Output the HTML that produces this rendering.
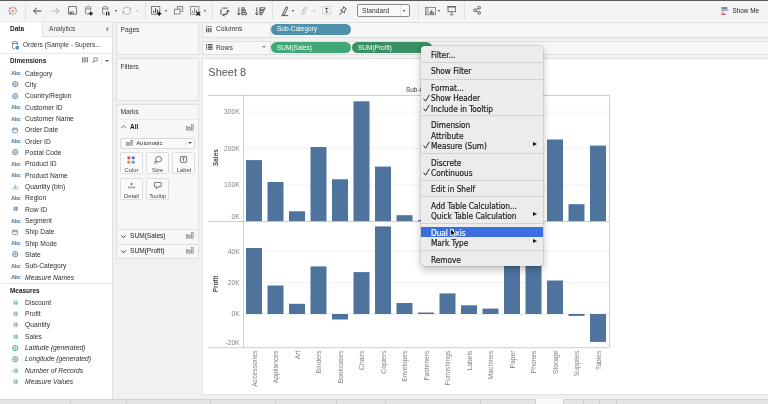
<!DOCTYPE html><html><head><meta charset="utf-8"><title>Tableau - Sheet 8</title><style>
*{box-sizing:border-box}
html,body{margin:0;padding:0}
body{width:768px;height:404px;overflow:hidden;position:relative;background:#f1f1f1;font-family:"Liberation Sans",sans-serif;font-size:6.6px;color:#333;line-height:1}
.a{position:absolute}
.t{position:absolute;white-space:nowrap;line-height:10px;height:10px}
.card{position:absolute;background:#f7f7f7;border:1px solid #e0e0e0}
.sep{position:absolute;width:1px;background:#e2e2e2;top:1.5px;height:18.5px}
.pill{position:absolute;border-radius:6px;color:#fff;font-size:6.5px;line-height:10.5px;padding-left:6px;white-space:nowrap}
.mi{position:absolute;left:10px;white-space:nowrap;line-height:10px;height:10px}
.ms{position:absolute;left:0;right:0;height:1px;background:#d2d2d2}
.ck{position:absolute;left:1.6px;width:7px;height:8px}
.ar{position:absolute;left:111.5px;width:0;height:0;border-left:4.6px solid #1a1a1a;border-top:2.7px solid transparent;border-bottom:2.7px solid transparent}
.btn{position:absolute;background:#fafafa;border:1px solid #dedede;border-radius:1.5px}
.btn span{position:absolute;left:0;right:0;text-align:center;top:13.4px;font-size:5.8px;line-height:7px;color:#444}
svg{position:absolute;overflow:visible}
</style></head><body><div id="w" style="position:absolute;left:0;top:0;width:768px;height:404px;will-change:transform">
<div class="a" style="left:0;top:0;width:768px;height:21px;background:#f4f4f4;border-bottom:1px solid #f8f8f8"></div>
<div class="a" style="left:0;top:0;width:768px;height:1px;background:#5a5a5a"></div>
<div class="sep" style="left:25.2px"></div>
<div class="sep" style="left:145px"></div>
<div class="sep" style="left:212.2px"></div>
<div class="sep" style="left:271.8px"></div>
<div class="sep" style="left:418px"></div>
<div class="sep" style="left:464px"></div>
<svg style="left:8px;top:5.6px" width="9.6" height="9.6" viewBox="0 0 20 20"><path d="M10 6.5V13.5M6.5 10H13.5" stroke="#e8762d" stroke-width="1.5"/><path d="M10 0.5V4.5M8 2.5H12" stroke="#7099a6" stroke-width="1.1"/><path d="M10 15.5V19.5M8 17.5H12" stroke="#7099a6" stroke-width="1.1"/><path d="M2.5 8V12M0.5 10H4.5" stroke="#59879b" stroke-width="1.1"/><path d="M17.5 8V12M15.5 10H19.5" stroke="#59879b" stroke-width="1.1"/><path d="M4.7 2.6V7M2.5 4.8H6.9" stroke="#c72035" stroke-width="1.2"/><path d="M15.3 2.6V7M13.1 4.8H17.5" stroke="#5b6591" stroke-width="1.2"/><path d="M4.7 13V17.4M2.5 15.2H6.9" stroke="#1f447e" stroke-width="1.2"/><path d="M15.3 13V17.4M13.1 15.2H17.5" stroke="#eb912c" stroke-width="1.2"/></svg>
<svg style="left:33.3px;top:6.8px" width="8.6" height="8" viewBox="0 0 8.6 8"><path d="M8.4 4H0.8M4 0.6L0.7 4L4 7.4" fill="none" stroke="#3c3c3c" stroke-width="0.95"/></svg>
<svg style="left:51px;top:6.8px" width="8.6" height="8" viewBox="0 0 8.6 8"><path d="M0.2 4H7.8M4.6 0.6L7.9 4L4.6 7.4" fill="none" stroke="#b4b4b4" stroke-width="1"/></svg>
<svg style="left:67.6px;top:6.3px" width="9" height="8.8" viewBox="0 0 9 8.8"><rect x="0.5" y="0.5" width="8" height="7.8" rx="0.7" fill="none" stroke="#7c7c7c" stroke-width="1.05"/><rect x="1.5" y="5.6" width="4.2" height="2.3" fill="#666"/><rect x="3.8" y="6.2" width="1" height="1.3" fill="#ddd"/></svg>
<svg style="left:85.3px;top:5.8px" width="8" height="10" viewBox="0 0 8 10"><path d="M0.6 1.8V7.2C0.6 8.2 3 8.4 3.6 8.3M5.8 4.6V1.8" fill="none" stroke="#787878" stroke-width="0.9"/><ellipse cx="3.2" cy="1.8" rx="2.6" ry="1.2" fill="none" stroke="#787878" stroke-width="0.9"/><path d="M5.8 5.4V9.6M3.7 7.5H7.9" stroke="#222" stroke-width="1.3"/></svg>
<svg style="left:102px;top:5.8px" width="8" height="10" viewBox="0 0 8 10"><path d="M0.6 1.8V7.2C0.6 8.2 2.6 8.4 3.2 8.3M5.8 4.6V1.8" fill="none" stroke="#787878" stroke-width="0.9"/><ellipse cx="3.2" cy="1.8" rx="2.6" ry="1.2" fill="none" stroke="#787878" stroke-width="0.9"/><path d="M4.6 5.8V9.6M6.8 5.8V9.6" stroke="#222" stroke-width="1.2"/></svg>
<div class="a" style="left:114.6px;top:9.8px;border-top:2.3px solid #3c3c3c;border-left:1.9px solid transparent;border-right:1.9px solid transparent"></div>
<svg style="left:122px;top:5.7px" width="9.6" height="9.6" viewBox="0 0 9 9"><path d="M1 3.6A3.7 3.7 0 0 1 8 3.4M8 5.4A3.7 3.7 0 0 1 1 5.6" fill="none" stroke="#b4b4b4" stroke-width="0.9"/><path d="M8.4 1.6V3.8H6.4M0.6 7.4V5.2H2.6" fill="none" stroke="#b4b4b4" stroke-width="0.8"/></svg>
<div class="a" style="left:136.10000000000002px;top:9.8px;border-top:2.3px solid #b4b4b4;border-left:1.9px solid transparent;border-right:1.9px solid transparent"></div>
<svg style="left:151px;top:6.1px" width="10.9" height="10" viewBox="0 0 10.5 9.6"><rect x="0.5" y="0.5" width="8" height="7.4" fill="none" stroke="#777" stroke-width="0.9"/><path d="M2.6 6.6V4.6M4.4 6.6V2.2M6.2 6.6V3.6" stroke="#333" stroke-width="0.9"/><path d="M8 5.4V9.4M6 7.4H10" stroke="#111" stroke-width="1.3"/></svg>
<div class="a" style="left:165.3px;top:9.8px;border-top:2.3px solid #3c3c3c;border-left:1.9px solid transparent;border-right:1.9px solid transparent"></div>
<svg style="left:174px;top:6px" width="9.4" height="9" viewBox="0 0 9.4 9"><rect x="3.4" y="0.5" width="5.4" height="4.8" fill="#f4f4f4" stroke="#777" stroke-width="0.8"/><rect x="0.5" y="3.2" width="5.4" height="4.8" fill="#f4f4f4" stroke="#777" stroke-width="0.8"/><path d="M5 2H7.4M5 3.2H7.4" stroke="#999" stroke-width="0.5"/></svg>
<svg style="left:190px;top:6.1px" width="10.9" height="10" viewBox="0 0 10.5 9.6"><rect x="0.5" y="0.5" width="8" height="7.4" fill="none" stroke="#8a8a8a" stroke-width="0.9"/><path d="M2.6 6.6V4.6M4.4 6.6V2.2M6.2 6.6V3.6" stroke="#777" stroke-width="0.9"/><path d="M6.2 5.6L9.8 9.2M9.8 5.6L6.2 9.2" stroke="#111" stroke-width="1.2"/></svg>
<div class="a" style="left:204.10000000000002px;top:9.8px;border-top:2.3px solid #3c3c3c;border-left:1.9px solid transparent;border-right:1.9px solid transparent"></div>
<svg style="left:220px;top:6.6px" width="9.4" height="9.2" viewBox="0 0 9 9"><path d="M2 1.1H7.6M0.9 2.4V7.4" stroke="#4a4a4a" stroke-width="1.3" stroke-dasharray="1.3 0.55"/><path d="M2.6 7.9C6.2 7.9 7.8 6.4 7.8 3" fill="none" stroke="#444" stroke-width="1"/><path d="M6.3 4.6L7.8 3L9 4.6M4.2 6.6L2.6 7.9L4.2 9.2" fill="none" stroke="#444" stroke-width="0.9"/></svg>
<svg style="left:237px;top:6.6px" width="10" height="9" viewBox="0 0 10 9"><path d="M1.8 0.4V7.8M0.3 6.2L1.8 8L3.3 6.2" fill="none" stroke="#3a3a3a" stroke-width="0.85"/><rect x="4.9" y="0.8" width="2.4" height="1.9" fill="none" stroke="#4e4e4e" stroke-width="0.85"/><rect x="4.9" y="3.3" width="3.4" height="1.9" fill="none" stroke="#4e4e4e" stroke-width="0.85"/><rect x="4.9" y="5.8" width="4.6" height="1.9" fill="none" stroke="#4e4e4e" stroke-width="0.85"/></svg>
<svg style="left:254.5px;top:6.6px" width="10" height="9" viewBox="0 0 10 9"><path d="M1.8 0.4V7.8M0.3 6.2L1.8 8L3.3 6.2" fill="none" stroke="#3a3a3a" stroke-width="0.85"/><rect x="4.9" y="0.8" width="4.8" height="1.9" fill="none" stroke="#4e4e4e" stroke-width="0.85"/><rect x="4.9" y="3.3" width="3.4" height="1.9" fill="none" stroke="#4e4e4e" stroke-width="0.85"/><rect x="4.9" y="5.8" width="2" height="1.9" fill="none" stroke="#4e4e4e" stroke-width="0.85"/></svg>
<svg style="left:280.6px;top:5.8px" width="8" height="10" viewBox="0 0 8 10"><path d="M2 7.4L5.2 0.8L6.8 1.6L3.6 8.2L1.6 8.8Z" fill="none" stroke="#333" stroke-width="0.8"/><path d="M0.4 9.6H7" stroke="#333" stroke-width="0.8"/></svg>
<div class="a" style="left:292.0px;top:9.8px;border-top:2.3px solid #3c3c3c;border-left:1.9px solid transparent;border-right:1.9px solid transparent"></div>
<svg style="left:301px;top:6px" width="6.4" height="9.4" viewBox="0 0 6.4 9.4"><path d="M1.2 6.4L3.8 1.6C4.6 0.2 6.4 1.2 5.6 2.6L2.8 7.8C2 9.2 0.2 8.2 1 6.8L3.4 2.6" fill="none" stroke="#b4b4b4" stroke-width="0.8"/></svg>
<div class="a" style="left:313.1px;top:9.8px;border-top:2.3px solid #b4b4b4;border-left:1.9px solid transparent;border-right:1.9px solid transparent"></div>
<svg style="left:322.3px;top:6.4px" width="9.4" height="8.6" viewBox="0 0 9.4 8.6"><rect x="0.5" y="0.5" width="8.4" height="7.6" fill="none" stroke="#b0b0b0" stroke-width="0.7" stroke-dasharray="1 0.6"/><path d="M3 2.4H6.4M4.7 2.4V6.2M3.8 6.2H5.6" stroke="#444" stroke-width="0.8" fill="none"/></svg>
<svg style="left:339.4px;top:6px" width="8" height="9.4" viewBox="0 0 8 9.4"><path d="M4.4 0.8L7.4 3L6.4 3.6L5.2 5.8L5.6 7L1.6 4.4L3 4L4.6 2Z" fill="none" stroke="#333" stroke-width="0.8" stroke-linejoin="round"/><path d="M3 5.6L0.6 9" stroke="#333" stroke-width="0.8"/></svg>
<svg style="left:425px;top:6.6px" width="11" height="8.4" viewBox="0 0 11 8.4"><rect x="0.4" y="0.4" width="10" height="7.4" fill="none" stroke="#777" stroke-width="0.8"/><path d="M1.6 1.6H3.4V3H1.6ZM1.6 3.8H3.4V5.2H1.6ZM1.6 5.8H3.4V6.8H1.6Z" fill="none" stroke="#888" stroke-width="0.5"/><path d="M5.4 6.8V4.6M6.8 6.8V3M8.2 6.8V5" stroke="#333" stroke-width="0.9"/><path d="M4.8 6.9H9.4" stroke="#555" stroke-width="0.5"/></svg>
<div class="a" style="left:438.1px;top:9.8px;border-top:2.3px solid #3c3c3c;border-left:1.9px solid transparent;border-right:1.9px solid transparent"></div>
<svg style="left:447px;top:6.2px" width="9.4" height="9.4" viewBox="0 0 9.4 9.4"><path d="M0.2 0.8H9.2" stroke="#444" stroke-width="0.9"/><rect x="1" y="0.8" width="7.4" height="5" fill="none" stroke="#555" stroke-width="0.8"/><path d="M4.7 5.8V8.6M3 8.8H6.4" stroke="#555" stroke-width="0.8"/></svg>
<svg style="left:472.6px;top:6.4px" width="8" height="8.6" viewBox="0 0 8 8.6"><circle cx="1.8" cy="4.3" r="1.3" fill="none" stroke="#444" stroke-width="0.8"/><circle cx="6.2" cy="1.7" r="1.3" fill="none" stroke="#444" stroke-width="0.8"/><circle cx="6.2" cy="6.9" r="1.3" fill="none" stroke="#444" stroke-width="0.8"/><path d="M2.9 3.6L5.1 2.4M2.9 5L5.1 6.2" stroke="#444" stroke-width="0.8"/></svg>
<svg style="left:721.3px;top:6.5px" width="7.6" height="9" viewBox="0 0 7.6 9"><path d="M0.4 1H6.4" stroke="#55557a" stroke-width="1.4"/><path d="M0.4 3.1H7.4" stroke="#7a8ccc" stroke-width="1.3"/><path d="M0.4 5.1H3" stroke="#e89a6a" stroke-width="1.1"/><path d="M0.4 7.2H4.8" stroke="#d2506c" stroke-width="1.5"/></svg>
<div class="a" style="left:357px;top:4.2px;width:52.5px;height:12.4px;background:#fafafa;border:1px solid #8a8a8a;border-radius:2px"></div>
<div class="a" style="left:400px;top:5.2px;width:1px;height:10.4px;background:#e6e6e6"></div>
<div class="t" style="left:362px;top:5.6px;font-size:6.7px;color:#333">Standard</div>
<div class="a" style="left:403.2px;top:9.6px;border-top:2.3px solid #333;border-left:1.9px solid transparent;border-right:1.9px solid transparent"></div>
<div class="t" style="left:732.5px;top:5.6px;font-size:6.4px;color:#222">Show Me</div>
<div class="a" style="left:0;top:21.5px;width:112.5px;height:377.5px;background:#fff;border-right:1px solid #e0e0e0"></div>
<div class="a" style="left:0;top:20.6px;width:112.5px;height:1px;background:#e8e8e8"></div>
<div class="a" style="left:41.8px;top:21.6px;width:70.7px;height:15.7px;background:#f5f5f5;border-left:1px solid #e0e0e0;border-bottom:1px solid #e0e0e0"></div>
<div class="t" style="left:10px;top:24px;font-weight:bold;font-size:6.5px;color:#222">Data</div>
<div class="t" style="left:49px;top:24px;font-size:6.6px;color:#444">Analytics</div>
<div class="a" style="left:0;top:53px;width:112px;height:1px;background:#ebebeb"></div>
<div class="t" style="left:23px;top:40px;font-size:6.5px;color:#333">Orders (Sample - Supers...</div>
<div class="t" style="left:10px;top:55.5px;font-weight:bold;font-size:6.4px;color:#222">Dimensions</div>
<div class="a" style="left:101px;top:56px;width:1px;height:9px;background:#e6e6e6"></div>
<div class="a" style="left:104.5px;top:59.5px;border-top:2.6px solid #555;border-left:2px solid transparent;border-right:2px solid transparent"></div>
<svg style="left:105.5px;top:26.6px" width="2.6" height="4.4" viewBox="0 0 3 5.4"><path d="M0 2.2L1.5 0.3L3 2.2ZM0 3.2L1.5 5.1L3 3.2Z" fill="#666"/></svg>
<svg style="left:12.2px;top:40.8px" width="7.4" height="8.8" viewBox="0 0 7.4 8.8"><ellipse cx="3" cy="1.6" rx="2.5" ry="1.1" fill="none" stroke="#666" stroke-width="0.8"/><path d="M0.5 1.6V6.6C0.5 7.6 2.6 7.8 3.2 7.7M5.5 1.6V4" fill="none" stroke="#666" stroke-width="0.8"/><circle cx="5.3" cy="6.6" r="1.85" fill="#3b7cc0"/><path d="M4.4 6.6L5.1 7.3L6.3 5.9" fill="none" stroke="#fff" stroke-width="0.45"/></svg>
<svg style="left:81.6px;top:57.4px" width="6" height="5.6" viewBox="0 0 6 5.6"><path d="M0.6 0.2V5.4M2.2 0.2V5.4M3.8 0.2V5.4M5.4 0.2V5.4" stroke="#7c7c7c" stroke-width="1"/></svg>
<svg style="left:91.6px;top:57px" width="6" height="6.4" viewBox="0 0 6 6.4"><circle cx="3.6" cy="2.4" r="1.9" fill="none" stroke="#666" stroke-width="0.8"/><path d="M2.2 3.8L0.4 6" stroke="#666" stroke-width="0.9"/></svg>
<div class="t" style="left:11.2px;top:68.30px;font-size:5.1px;font-weight:bold;color:#5e8bb2;letter-spacing:-0.1px;-webkit-text-stroke:0.2px #5e8bb2">Abc</div>
<div class="t" style="left:25.1px;top:68.60px;font-size:6.7px;color:#2e2e2e;">Category</div>
<svg style="left:12px;top:81.33px" width="6.4" height="6.4" viewBox="0 0 10 10"><circle cx="5" cy="5" r="4.1" fill="#fff" stroke="#5e8bb2" stroke-width="1.5"/><path d="M5 1V9M1 5H9" stroke="#5e8bb2" stroke-width="1"/></svg>
<div class="t" style="left:25.1px;top:79.93px;font-size:6.7px;color:#2e2e2e;">City</div>
<svg style="left:12px;top:92.66px" width="6.4" height="6.4" viewBox="0 0 10 10"><circle cx="5" cy="5" r="4.1" fill="#fff" stroke="#5e8bb2" stroke-width="1.5"/><path d="M5 1V9M1 5H9" stroke="#5e8bb2" stroke-width="1"/></svg>
<div class="t" style="left:25.1px;top:91.26px;font-size:6.7px;color:#2e2e2e;">Country/Region</div>
<div class="t" style="left:11.2px;top:102.29px;font-size:5.1px;font-weight:bold;color:#5e8bb2;letter-spacing:-0.1px;-webkit-text-stroke:0.2px #5e8bb2">Abc</div>
<div class="t" style="left:25.1px;top:102.59px;font-size:6.7px;color:#2e2e2e;">Customer ID</div>
<div class="t" style="left:11.2px;top:113.62px;font-size:5.1px;font-weight:bold;color:#5e8bb2;letter-spacing:-0.1px;-webkit-text-stroke:0.2px #5e8bb2">Abc</div>
<div class="t" style="left:25.1px;top:113.92px;font-size:6.7px;color:#2e2e2e;">Customer Name</div>
<svg style="left:12.3px;top:126.65px" width="6" height="6.2" viewBox="0 0 10 10"><rect x="1" y="2" width="8" height="7.2" rx="1.2" fill="none" stroke="#5e8bb2" stroke-width="1.4"/><path d="M1 4.2H9" stroke="#5e8bb2" stroke-width="1.2"/><path d="M3 0.6V2.6M7 0.6V2.6" stroke="#5e8bb2" stroke-width="1.1"/></svg>
<div class="t" style="left:25.1px;top:125.25px;font-size:6.7px;color:#2e2e2e;">Order Date</div>
<div class="t" style="left:11.2px;top:136.28px;font-size:5.1px;font-weight:bold;color:#5e8bb2;letter-spacing:-0.1px;-webkit-text-stroke:0.2px #5e8bb2">Abc</div>
<div class="t" style="left:25.1px;top:136.58px;font-size:6.7px;color:#2e2e2e;">Order ID</div>
<svg style="left:12px;top:149.31px" width="6.4" height="6.4" viewBox="0 0 10 10"><circle cx="5" cy="5" r="4.1" fill="#fff" stroke="#5e8bb2" stroke-width="1.5"/><path d="M5 1V9M1 5H9" stroke="#5e8bb2" stroke-width="1"/></svg>
<div class="t" style="left:25.1px;top:147.91px;font-size:6.7px;color:#2e2e2e;">Postal Code</div>
<div class="t" style="left:11.2px;top:158.94px;font-size:5.1px;font-weight:bold;color:#5e8bb2;letter-spacing:-0.1px;-webkit-text-stroke:0.2px #5e8bb2">Abc</div>
<div class="t" style="left:25.1px;top:159.24px;font-size:6.7px;color:#2e2e2e;">Product ID</div>
<div class="t" style="left:11.2px;top:170.27px;font-size:5.1px;font-weight:bold;color:#5e8bb2;letter-spacing:-0.1px;-webkit-text-stroke:0.2px #5e8bb2">Abc</div>
<div class="t" style="left:25.1px;top:170.57px;font-size:6.7px;color:#2e2e2e;">Product Name</div>
<svg style="left:12px;top:183.50px" width="7" height="5.6" viewBox="0 0 12 10"><path d="M1 9.5V7M3.6 9.5V3.5M6.2 9.5V1M8.8 9.5V4.5M11.2 9.5V8" stroke="#58a888" stroke-width="1.2" fill="none"/></svg>
<div class="t" style="left:25.1px;top:181.90px;font-size:6.7px;color:#2e2e2e;">Quantity (bin)</div>
<div class="t" style="left:11.2px;top:192.93px;font-size:5.1px;font-weight:bold;color:#5e8bb2;letter-spacing:-0.1px;-webkit-text-stroke:0.2px #5e8bb2">Abc</div>
<div class="t" style="left:25.1px;top:193.23px;font-size:6.7px;color:#2e2e2e;">Region</div>
<svg style="left:12.6px;top:206.36px" width="5.4" height="5.6" viewBox="0 0 10 10"><path d="M3.4 0.5V9.5M6.8 0.5V9.5M0.5 3.3H9.5M0.5 6.7H9.5" stroke="#5e8bb2" stroke-width="1.5" fill="none"/></svg>
<div class="t" style="left:25.1px;top:204.56px;font-size:6.7px;color:#2e2e2e;">Row ID</div>
<div class="t" style="left:11.2px;top:215.59px;font-size:5.1px;font-weight:bold;color:#5e8bb2;letter-spacing:-0.1px;-webkit-text-stroke:0.2px #5e8bb2">Abc</div>
<div class="t" style="left:25.1px;top:215.89px;font-size:6.7px;color:#2e2e2e;">Segment</div>
<svg style="left:12.3px;top:228.62px" width="6" height="6.2" viewBox="0 0 10 10"><rect x="1" y="2" width="8" height="7.2" rx="1.2" fill="none" stroke="#5e8bb2" stroke-width="1.4"/><path d="M1 4.2H9" stroke="#5e8bb2" stroke-width="1.2"/><path d="M3 0.6V2.6M7 0.6V2.6" stroke="#5e8bb2" stroke-width="1.1"/></svg>
<div class="t" style="left:25.1px;top:227.22px;font-size:6.7px;color:#2e2e2e;">Ship Date</div>
<div class="t" style="left:11.2px;top:238.25px;font-size:5.1px;font-weight:bold;color:#5e8bb2;letter-spacing:-0.1px;-webkit-text-stroke:0.2px #5e8bb2">Abc</div>
<div class="t" style="left:25.1px;top:238.55px;font-size:6.7px;color:#2e2e2e;">Ship Mode</div>
<svg style="left:12px;top:251.28px" width="6.4" height="6.4" viewBox="0 0 10 10"><circle cx="5" cy="5" r="4.1" fill="#fff" stroke="#5e8bb2" stroke-width="1.5"/><path d="M5 1V9M1 5H9" stroke="#5e8bb2" stroke-width="1"/></svg>
<div class="t" style="left:25.1px;top:249.88px;font-size:6.7px;color:#2e2e2e;">State</div>
<div class="t" style="left:11.2px;top:260.91px;font-size:5.1px;font-weight:bold;color:#5e8bb2;letter-spacing:-0.1px;-webkit-text-stroke:0.2px #5e8bb2">Abc</div>
<div class="t" style="left:25.1px;top:261.21px;font-size:6.7px;color:#2e2e2e;">Sub-Category</div>
<div class="t" style="left:11.2px;top:272.24px;font-size:5.1px;font-weight:bold;color:#5e8bb2;font-style:italic;letter-spacing:-0.1px;-webkit-text-stroke:0.2px #5e8bb2">Abc</div>
<div class="t" style="left:25.1px;top:272.54px;font-size:6.7px;color:#2e2e2e;font-style:italic;">Measure Names</div>
<div class="a" style="left:0;top:283.3px;width:112px;height:1px;background:#ebebeb"></div>
<div class="t" style="left:10px;top:285.8px;font-weight:bold;font-size:6.4px;color:#222">Measures</div>
<svg style="left:12.6px;top:299.60px" width="5.4" height="5.6" viewBox="0 0 10 10"><path d="M3.4 0.5V9.5M6.8 0.5V9.5M0.5 3.3H9.5M0.5 6.7H9.5" stroke="#58a888" stroke-width="1.15" fill="none"/></svg>
<div class="t" style="left:25.1px;top:297.80px;font-size:6.7px;color:#2e2e2e;">Discount</div>
<svg style="left:12.6px;top:310.93px" width="5.4" height="5.6" viewBox="0 0 10 10"><path d="M3.4 0.5V9.5M6.8 0.5V9.5M0.5 3.3H9.5M0.5 6.7H9.5" stroke="#58a888" stroke-width="1.15" fill="none"/></svg>
<div class="t" style="left:25.1px;top:309.13px;font-size:6.7px;color:#2e2e2e;">Profit</div>
<svg style="left:12.6px;top:322.26px" width="5.4" height="5.6" viewBox="0 0 10 10"><path d="M3.4 0.5V9.5M6.8 0.5V9.5M0.5 3.3H9.5M0.5 6.7H9.5" stroke="#58a888" stroke-width="1.15" fill="none"/></svg>
<div class="t" style="left:25.1px;top:320.46px;font-size:6.7px;color:#2e2e2e;">Quantity</div>
<svg style="left:12.6px;top:333.59px" width="5.4" height="5.6" viewBox="0 0 10 10"><path d="M3.4 0.5V9.5M6.8 0.5V9.5M0.5 3.3H9.5M0.5 6.7H9.5" stroke="#58a888" stroke-width="1.15" fill="none"/></svg>
<div class="t" style="left:25.1px;top:331.79px;font-size:6.7px;color:#2e2e2e;">Sales</div>
<svg style="left:12px;top:344.52px" width="6.4" height="6.4" viewBox="0 0 10 10"><circle cx="5" cy="5" r="4.1" fill="#fff" stroke="#58a888" stroke-width="1.5"/><path d="M5 1V9M1 5H9" stroke="#58a888" stroke-width="1"/></svg>
<div class="t" style="left:25.1px;top:343.12px;font-size:6.7px;color:#2e2e2e;font-style:italic;">Latitude (generated)</div>
<svg style="left:12px;top:355.85px" width="6.4" height="6.4" viewBox="0 0 10 10"><circle cx="5" cy="5" r="4.1" fill="#fff" stroke="#58a888" stroke-width="1.5"/><path d="M5 1V9M1 5H9" stroke="#58a888" stroke-width="1"/></svg>
<div class="t" style="left:25.1px;top:354.45px;font-size:6.7px;color:#2e2e2e;font-style:italic;">Longitude (generated)</div>
<svg style="left:10.6px;top:367.58px" width="7.6" height="5.6" viewBox="0 0 14 10"><path d="M7.4 0.5V9.5M10.8 0.5V9.5M4.5 3.3H13.5M4.5 6.7H13.5" stroke="#58a888" stroke-width="1.15" fill="none"/><path d="M0.5 5H3.5" stroke="#58a888" stroke-width="1.3"/></svg>
<div class="t" style="left:25.1px;top:365.78px;font-size:6.7px;color:#2e2e2e;font-style:italic;">Number of Records</div>
<svg style="left:12.6px;top:378.91px" width="5.4" height="5.6" viewBox="0 0 10 10"><path d="M3.4 0.5V9.5M6.8 0.5V9.5M0.5 3.3H9.5M0.5 6.7H9.5" stroke="#58a888" stroke-width="1.15" fill="none"/></svg>
<div class="t" style="left:25.1px;top:377.11px;font-size:6.7px;color:#2e2e2e;font-style:italic;">Measure Values</div>
<div class="card" style="left:116px;top:21.7px;width:82.8px;height:33px"></div>
<div class="t" style="left:120.5px;top:25px;font-size:6.7px;color:#333">Pages</div>
<div class="card" style="left:116px;top:58px;width:82.8px;height:42.5px"></div>
<div class="t" style="left:120.5px;top:61.5px;font-size:6.7px;color:#333">Filters</div>
<div class="card" style="left:116px;top:103.5px;width:82.8px;height:155px"></div>
<div class="t" style="left:120.5px;top:107px;font-size:6.7px;color:#333">Marks</div>
<div class="a" style="left:117.5px;top:119px;width:80.5px;height:1px;background:#e9e9e9"></div>
<div class="t" style="left:130px;top:121.7px;font-size:6.5px;font-weight:bold;color:#222">All</div>
<div class="a" style="left:120px;top:137.5px;width:75px;height:11.2px;background:#fafafa;border:1px solid #d8d8d8;border-radius:2px"></div>
<div class="a" style="left:185.3px;top:138.5px;width:1px;height:9.2px;background:#e8e8e8"></div>
<div class="a" style="left:188.4px;top:142.2px;border-top:2.6px solid #555;border-left:2px solid transparent;border-right:2px solid transparent"></div>
<div class="t" style="left:136.2px;top:138.4px;font-size:5.9px;color:#333">Automatic</div>
<div class="btn" style="left:120px;top:152.4px;width:22.8px;height:22px"><span>Color</span></div>
<div class="btn" style="left:146.2px;top:152.4px;width:22.8px;height:22px"><span>Size</span></div>
<div class="btn" style="left:172.4px;top:152.4px;width:23px;height:22px"><span>Label</span></div>
<div class="btn" style="left:120px;top:178.2px;width:22.8px;height:22px"><span>Detail</span></div>
<div class="btn" style="left:146.2px;top:178.2px;width:22.8px;height:22px"><span>Tooltip</span></div>
<div class="a" style="left:117.5px;top:229px;width:80.5px;height:1px;background:#e2e2e2"></div>
<div class="a" style="left:117.5px;top:243.5px;width:80.5px;height:1px;background:#e2e2e2"></div>
<div class="t" style="left:130px;top:231.3px;font-size:6.6px;color:#222">SUM(Sales)</div>
<div class="t" style="left:130px;top:245.6px;font-size:6.6px;color:#222">SUM(Profit)</div>
<div class="card" style="left:201.8px;top:22px;width:571px;height:15.5px;background:#f7f7f7"></div>
<div class="a" style="left:269.5px;top:23px;width:1px;height:13.5px;background:#dedede"></div>
<div class="t" style="left:216px;top:24.3px;font-size:6.7px;color:#333">Columns</div>
<div class="card" style="left:201.8px;top:40.5px;width:571px;height:14.5px;background:#f7f7f7"></div>
<div class="a" style="left:269.5px;top:41.5px;width:1px;height:12.5px;background:#dedede"></div>
<div class="t" style="left:216px;top:42.5px;font-size:6.7px;color:#333">Rows</div>
<div class="a" style="left:262px;top:46.4px;border-top:2.8px solid #8c8c8c;border-left:2.4px solid transparent;border-right:2.4px solid transparent"></div>
<div class="pill" style="left:271px;top:24px;width:80px;height:10.5px;background:#4f91ab">Sub-Category</div>
<div class="pill" style="left:271px;top:42px;width:80px;height:11px;background:#40a876;line-height:11px">SUM(Sales)</div>
<div class="pill" style="left:352px;top:42px;width:80px;height:11px;background:#3a9065;line-height:11px">SUM(Profit)</div>
<svg style="left:121.2px;top:124.6px" width="5" height="3.4" viewBox="0 0 5 3.4"><path d="M0.3 3L2.5 0.6L4.7 3" fill="none" stroke="#555" stroke-width="0.8"/></svg>
<svg style="left:186px;top:123.7px" width="7.6" height="6.6" viewBox="0 0 7.6 6.6"><rect x="0.3" y="2.5" width="1.6" height="3.9" fill="#c8c8c8" stroke="#6e6e6e" stroke-width="0.42"/><rect x="2.9" y="3.1" width="1.5" height="3.3" fill="#c8c8c8" stroke="#6e6e6e" stroke-width="0.42"/><rect x="5.3" y="0.3" width="1.9" height="6.1" fill="#c8c8c8" stroke="#6e6e6e" stroke-width="0.42"/></svg>
<svg style="left:126px;top:140.3px" width="7.2" height="5.8" viewBox="0 0 7.6 6.6"><rect x="0.3" y="2.5" width="1.6" height="3.9" fill="#c8c8c8" stroke="#5a5a5a" stroke-width="0.42"/><rect x="2.9" y="3.1" width="1.5" height="3.3" fill="#c8c8c8" stroke="#5a5a5a" stroke-width="0.42"/><rect x="5.3" y="0.3" width="1.9" height="6.1" fill="#c8c8c8" stroke="#5a5a5a" stroke-width="0.42"/></svg>
<svg style="left:121.2px;top:235.2px" width="5" height="3.4" viewBox="0 0 5 3.4"><path d="M0.3 0.4L2.5 2.8L4.7 0.4" fill="none" stroke="#444" stroke-width="1"/></svg>
<svg style="left:121.2px;top:249.6px" width="5" height="3.4" viewBox="0 0 5 3.4"><path d="M0.3 0.4L2.5 2.8L4.7 0.4" fill="none" stroke="#444" stroke-width="1"/></svg>
<svg style="left:186px;top:232.4px" width="7.6" height="6.6" viewBox="0 0 7.6 6.6"><rect x="0.3" y="2.5" width="1.6" height="3.9" fill="#c8c8c8" stroke="#6e6e6e" stroke-width="0.42"/><rect x="2.9" y="3.1" width="1.5" height="3.3" fill="#c8c8c8" stroke="#6e6e6e" stroke-width="0.42"/><rect x="5.3" y="0.3" width="1.9" height="6.1" fill="#c8c8c8" stroke="#6e6e6e" stroke-width="0.42"/></svg>
<svg style="left:186px;top:246.8px" width="7.6" height="6.6" viewBox="0 0 7.6 6.6"><rect x="0.3" y="2.5" width="1.6" height="3.9" fill="#c8c8c8" stroke="#6e6e6e" stroke-width="0.42"/><rect x="2.9" y="3.1" width="1.5" height="3.3" fill="#c8c8c8" stroke="#6e6e6e" stroke-width="0.42"/><rect x="5.3" y="0.3" width="1.9" height="6.1" fill="#c8c8c8" stroke="#6e6e6e" stroke-width="0.42"/></svg>
<svg style="left:127.4px;top:155.6px" width="8" height="8" viewBox="0 0 6.6 6.6"><circle cx="1.5" cy="1.5" r="1.3" fill="#d4506a"/><circle cx="5.1" cy="1.5" r="1.3" fill="#5a63a8"/><circle cx="1.5" cy="5.1" r="1.3" fill="#e8923a"/><circle cx="5.1" cy="5.1" r="1.3" fill="#5ba0d0"/></svg>
<svg style="left:153.6px;top:155.6px" width="8" height="8" viewBox="0 0 8 8"><ellipse cx="4.6" cy="3.2" rx="3" ry="2.7" fill="none" stroke="#555" stroke-width="0.8"/><circle cx="1.6" cy="6.4" r="1.1" fill="#fcfcfc" stroke="#555" stroke-width="0.7"/></svg>
<svg style="left:180.2px;top:156.2px" width="7" height="6.8" viewBox="0 0 7 6.8"><rect x="0.4" y="0.4" width="6.2" height="6" rx="0.6" fill="none" stroke="#555" stroke-width="0.8"/><path d="M2.2 2H4.8M3.5 2V5" stroke="#555" stroke-width="0.8"/></svg>
<svg style="left:128.2px;top:183px" width="7" height="5.6" viewBox="0 0 7 5.6"><circle cx="3.5" cy="1" r="0.9" fill="#555"/><circle cx="1" cy="4.4" r="0.8" fill="none" stroke="#555" stroke-width="0.5"/><circle cx="3.5" cy="4.4" r="0.8" fill="none" stroke="#555" stroke-width="0.5"/><circle cx="6" cy="4.4" r="0.8" fill="none" stroke="#555" stroke-width="0.5"/></svg>
<svg style="left:154px;top:181.8px" width="7.6" height="7.4" viewBox="0 0 7.6 7.4"><path d="M0.8 0.5H6.8Q7.2 0.5 7.2 0.9V4.4Q7.2 4.8 6.8 4.8H3.6L2.2 6.8V4.8H0.8Q0.4 4.8 0.4 4.4V0.9Q0.4 0.5 0.8 0.5Z" fill="none" stroke="#555" stroke-width="0.8" stroke-linejoin="round"/></svg>
<svg style="left:206.4px;top:25.7px" width="5.6" height="6.2" viewBox="0 0 5.6 6.2"><path d="M0.7 0V1.1M2.8 0V1.1M4.9 0V1.1" stroke="#4a4a4a" stroke-width="1.2"/><path d="M0.7 1.9V6.2M2.8 1.9V6.2M4.9 1.9V6.2" stroke="#4a4a4a" stroke-width="1.2"/></svg>
<svg style="left:206px;top:44.4px" width="6.6" height="5.8" viewBox="0 0 6.6 5.8"><path d="M0 0.6H1.1M0 2.1H1.1M0 3.7H1.1M0 5.2H1.1" stroke="#4a4a4a" stroke-width="1"/><path d="M1.9 0.6H6.6M1.9 2.1H6.6M1.9 3.7H6.6M1.9 5.2H6.6" stroke="#4a4a4a" stroke-width="1"/></svg>
<div class="a" style="left:201.8px;top:58px;width:571px;height:337.2px;background:#fff;border:1px solid #e2e2e2"></div>
<div class="t" style="left:208.3px;top:66.2px;font-size:11px;line-height:12px;height:12px;color:#555">Sheet 8</div>
<svg style="left:0;top:0" width="768" height="404" viewBox="0 0 768 404">
<path d="M243.5 112H609.5" stroke="#f2f2f2" stroke-width="1"/>
<path d="M243.5 148.5H609.5" stroke="#f2f2f2" stroke-width="1"/>
<path d="M243.5 185H609.5" stroke="#f2f2f2" stroke-width="1"/>
<path d="M243.5 251H609.5" stroke="#f2f2f2" stroke-width="1"/>
<path d="M243.5 282.5H609.5" stroke="#f2f2f2" stroke-width="1"/>
<path d="M243.5 314.0H609.5" stroke="#e6e6e6" stroke-width="1"/>
<rect x="246.0" y="160.1" width="16.0" height="61.1" fill="#4e749d"/>
<rect x="246.0" y="248.0" width="16.0" height="66.0" fill="#4e749d"/>
<rect x="267.5" y="182.0" width="16.0" height="39.2" fill="#4e749d"/>
<rect x="267.5" y="285.5" width="16.0" height="28.5" fill="#4e749d"/>
<rect x="289.0" y="211.3" width="16.0" height="9.9" fill="#4e749d"/>
<rect x="289.0" y="303.8" width="16.0" height="10.2" fill="#4e749d"/>
<rect x="310.5" y="147.0" width="16.0" height="74.2" fill="#4e749d"/>
<rect x="310.5" y="266.4" width="16.0" height="47.6" fill="#4e749d"/>
<rect x="332.0" y="179.3" width="16.0" height="41.9" fill="#4e749d"/>
<rect x="332.0" y="314.0" width="16.0" height="5.5" fill="#4e749d"/>
<rect x="353.5" y="101.3" width="16.0" height="119.9" fill="#4e749d"/>
<rect x="353.5" y="272.1" width="16.0" height="41.9" fill="#4e749d"/>
<rect x="375.0" y="166.6" width="16.0" height="54.6" fill="#4e749d"/>
<rect x="375.0" y="226.4" width="16.0" height="87.6" fill="#4e749d"/>
<rect x="396.5" y="215.2" width="16.0" height="6.0" fill="#4e749d"/>
<rect x="396.5" y="303.0" width="16.0" height="11.0" fill="#4e749d"/>
<rect x="418.0" y="220.1" width="16.0" height="1.1" fill="#4e749d"/>
<rect x="418.0" y="312.5" width="16.0" height="1.5" fill="#4e749d"/>
<rect x="439.5" y="187.7" width="16.0" height="33.5" fill="#4e749d"/>
<rect x="439.5" y="293.4" width="16.0" height="20.6" fill="#4e749d"/>
<rect x="461.0" y="216.6" width="16.0" height="4.6" fill="#4e749d"/>
<rect x="461.0" y="305.3" width="16.0" height="8.7" fill="#4e749d"/>
<rect x="482.5" y="152.1" width="16.0" height="69.1" fill="#4e749d"/>
<rect x="482.5" y="308.6" width="16.0" height="5.4" fill="#4e749d"/>
<rect x="504.0" y="192.5" width="16.0" height="28.7" fill="#4e749d"/>
<rect x="504.0" y="260.3" width="16.0" height="53.7" fill="#4e749d"/>
<rect x="525.5" y="100.7" width="16.0" height="120.5" fill="#4e749d"/>
<rect x="525.5" y="243.9" width="16.0" height="70.1" fill="#4e749d"/>
<rect x="547.0" y="139.5" width="16.0" height="81.7" fill="#4e749d"/>
<rect x="547.0" y="280.5" width="16.0" height="33.5" fill="#4e749d"/>
<rect x="568.5" y="204.2" width="16.0" height="17.0" fill="#4e749d"/>
<rect x="568.5" y="314.0" width="16.0" height="1.9" fill="#4e749d"/>
<rect x="590.0" y="145.6" width="16.0" height="75.6" fill="#4e749d"/>
<rect x="590.0" y="314.0" width="16.0" height="27.9" fill="#4e749d"/>
<path d="M208 95.35H609.5M208 221.45H609.5M208 347.7H609.5" fill="none" stroke="#a8a8a8" stroke-width="0.6"/>
<path d="M243.5 95V347.5M609.5 95V347.5" fill="none" stroke="#cfcfcf" stroke-width="1"/>
<text x="239.6" y="114.3" font-family="Liberation Sans, sans-serif" font-size="6.7" fill="#858585" text-anchor="end">300K</text>
<text x="239.6" y="150.8" font-family="Liberation Sans, sans-serif" font-size="6.7" fill="#858585" text-anchor="end">200K</text>
<text x="239.6" y="187.3" font-family="Liberation Sans, sans-serif" font-size="6.7" fill="#858585" text-anchor="end">100K</text>
<text x="239.6" y="219.3" font-family="Liberation Sans, sans-serif" font-size="6.7" fill="#858585" text-anchor="end">0K</text>
<text x="239.6" y="254.3" font-family="Liberation Sans, sans-serif" font-size="6.7" fill="#858585" text-anchor="end">40K</text>
<text x="239.6" y="285.3" font-family="Liberation Sans, sans-serif" font-size="6.7" fill="#858585" text-anchor="end">20K</text>
<text x="239.6" y="316.3" font-family="Liberation Sans, sans-serif" font-size="6.7" fill="#858585" text-anchor="end">0K</text>
<text x="239.6" y="345.3" font-family="Liberation Sans, sans-serif" font-size="6.7" fill="#858585" text-anchor="end">-20K</text>
<text transform="translate(218.4 157.6) rotate(-90)" font-family="Liberation Sans, sans-serif" font-size="6.4" fill="#484848" font-weight="bold" text-anchor="middle">Sales</text>
<text transform="translate(218.4 284) rotate(-90)" font-family="Liberation Sans, sans-serif" font-size="6.4" fill="#484848" font-weight="bold" text-anchor="middle">Profit</text>
<text x="405.9" y="92.1" font-family="Liberation Sans, sans-serif" font-size="6.5" fill="#3a3a3a">Sub-Category</text>
<text transform="translate(256.8 350.6) rotate(-90)" font-family="Liberation Sans, sans-serif" font-size="6.7" fill="#808080" text-anchor="end">Accessories</text>
<text transform="translate(278.3 350.6) rotate(-90)" font-family="Liberation Sans, sans-serif" font-size="6.7" fill="#808080" text-anchor="end">Appliances</text>
<text transform="translate(299.8 350.6) rotate(-90)" font-family="Liberation Sans, sans-serif" font-size="6.7" fill="#808080" text-anchor="end">Art</text>
<text transform="translate(321.3 350.6) rotate(-90)" font-family="Liberation Sans, sans-serif" font-size="6.7" fill="#808080" text-anchor="end">Binders</text>
<text transform="translate(342.8 350.6) rotate(-90)" font-family="Liberation Sans, sans-serif" font-size="6.7" fill="#808080" text-anchor="end">Bookcases</text>
<text transform="translate(364.3 350.6) rotate(-90)" font-family="Liberation Sans, sans-serif" font-size="6.7" fill="#808080" text-anchor="end">Chairs</text>
<text transform="translate(385.8 350.6) rotate(-90)" font-family="Liberation Sans, sans-serif" font-size="6.7" fill="#808080" text-anchor="end">Copiers</text>
<text transform="translate(407.3 350.6) rotate(-90)" font-family="Liberation Sans, sans-serif" font-size="6.7" fill="#808080" text-anchor="end">Envelopes</text>
<text transform="translate(428.8 350.6) rotate(-90)" font-family="Liberation Sans, sans-serif" font-size="6.7" fill="#808080" text-anchor="end">Fasteners</text>
<text transform="translate(450.3 350.6) rotate(-90)" font-family="Liberation Sans, sans-serif" font-size="6.7" fill="#808080" text-anchor="end">Furnishings</text>
<text transform="translate(471.8 350.6) rotate(-90)" font-family="Liberation Sans, sans-serif" font-size="6.7" fill="#808080" text-anchor="end">Labels</text>
<text transform="translate(493.3 350.6) rotate(-90)" font-family="Liberation Sans, sans-serif" font-size="6.7" fill="#808080" text-anchor="end">Machines</text>
<text transform="translate(514.8 350.6) rotate(-90)" font-family="Liberation Sans, sans-serif" font-size="6.7" fill="#808080" text-anchor="end">Paper</text>
<text transform="translate(536.3 350.6) rotate(-90)" font-family="Liberation Sans, sans-serif" font-size="6.7" fill="#808080" text-anchor="end">Phones</text>
<text transform="translate(557.8 350.6) rotate(-90)" font-family="Liberation Sans, sans-serif" font-size="6.7" fill="#808080" text-anchor="end">Storage</text>
<text transform="translate(579.3 350.6) rotate(-90)" font-family="Liberation Sans, sans-serif" font-size="6.7" fill="#808080" text-anchor="end">Supplies</text>
<text transform="translate(600.8 350.6) rotate(-90)" font-family="Liberation Sans, sans-serif" font-size="6.7" fill="#808080" text-anchor="end">Tables</text>
</svg>
<div class="a" style="left:0;top:399px;width:768px;height:5px;background:#e4e4e4;border-top:1px solid #d2d2d2"></div>
<div class="a" style="left:70px;top:400px;width:1px;height:4px;background:#cfcfcf"></div>
<div class="a" style="left:126px;top:400px;width:1px;height:4px;background:#cfcfcf"></div>
<div class="a" style="left:210px;top:400px;width:1px;height:4px;background:#cfcfcf"></div>
<div class="a" style="left:275px;top:400px;width:1px;height:4px;background:#cfcfcf"></div>
<div class="a" style="left:336px;top:400px;width:1px;height:4px;background:#cfcfcf"></div>
<div class="a" style="left:385px;top:400px;width:1px;height:4px;background:#cfcfcf"></div>
<div class="a" style="left:480px;top:400px;width:1px;height:4px;background:#cfcfcf"></div>
<div class="a" style="left:583px;top:400px;width:1px;height:4px;background:#cfcfcf"></div>
<div class="a" style="left:599px;top:400px;width:1px;height:4px;background:#cfcfcf"></div>
<div class="a" style="left:616px;top:400px;width:1px;height:4px;background:#cfcfcf"></div>
<div class="a" style="left:535px;top:399px;width:29px;height:5px;background:#fafafa;border-left:1px solid #cfcfcf;border-right:1px solid #cfcfcf"></div>
<div class="a" style="left:421px;top:46px;width:122px;height:219.5px;background:#ececec;border-radius:3.5px;box-shadow:0 0 0 0.5px rgba(0,0,0,0.10),0 3.5px 8px rgba(0,0,0,0.24),0 0 3px rgba(0,0,0,0.10);-webkit-text-stroke:0.18px currentColor;font-family:'DejaVu Sans Condensed','DejaVu Sans',sans-serif;font-size:8.2px;color:#1c1c1c">
<div class="mi" style="top:3.7px">Filter...</div>
<div class="ms" style="top:15.5px"></div>
<div class="mi" style="top:20.2px">Show Filter</div>
<div class="ms" style="top:32.5px"></div>
<div class="mi" style="top:37.2px">Format...</div>
<div class="mi" style="top:47.2px">Show Header</div>
<svg class="ck" style="top:47.5px" viewBox="0 0 7 8"><path d="M0.6 4.6L2.6 7.2L6.4 0.8" fill="none" stroke="#222" stroke-width="0.95"/></svg>
<div class="mi" style="top:57.7px">Include in Tooltip</div>
<svg class="ck" style="top:58px" viewBox="0 0 7 8"><path d="M0.6 4.6L2.6 7.2L6.4 0.8" fill="none" stroke="#222" stroke-width="0.95"/></svg>
<div class="ms" style="top:69.0px"></div>
<div class="mi" style="top:74.2px">Dimension</div>
<div class="mi" style="top:84.7px">Attribute</div>
<div class="mi" style="top:94.7px">Measure (Sum)</div>
<svg class="ck" style="top:95px" viewBox="0 0 7 8"><path d="M0.6 4.6L2.6 7.2L6.4 0.8" fill="none" stroke="#222" stroke-width="0.95"/></svg>
<div class="ar" style="top:95.7px"></div>
<div class="ms" style="top:107.0px"></div>
<div class="mi" style="top:111.7px">Discrete</div>
<div class="mi" style="top:121.7px">Continuous</div>
<svg class="ck" style="top:122px" viewBox="0 0 7 8"><path d="M0.6 4.6L2.6 7.2L6.4 0.8" fill="none" stroke="#222" stroke-width="0.95"/></svg>
<div class="ms" style="top:134.0px"></div>
<div class="mi" style="top:138.2px">Edit in Shelf</div>
<div class="ms" style="top:150.0px"></div>
<div class="mi" style="top:155.2px">Add Table Calculation...</div>
<div class="mi" style="top:165.2px">Quick Table Calculation</div>
<div class="ar" style="top:166.2px"></div>
<div class="ms" style="top:177.0px"></div>
<div class="a" style="left:0;right:0;top:180.9px;height:10.6px;background:#3b6fe1"></div>
<div class="mi" style="top:181.7px;color:#fff">Dual Axis</div>
<div class="mi" style="top:192.2px">Mark Type</div>
<div class="ar" style="top:193.2px"></div>
<div class="ms" style="top:204.0px"></div>
<div class="mi" style="top:208.7px">Remove</div>
</div>
<svg style="left:449.8px;top:227.8px" width="6.6" height="10" viewBox="0 0 12 18"><path d="M1 1V14.2L4.1 11.4L6.3 16.6L8.5 15.7L6.3 10.6H10.6Z" fill="#111" stroke="#fff" stroke-width="1.3" stroke-linejoin="round"/></svg>
</div></body></html>
